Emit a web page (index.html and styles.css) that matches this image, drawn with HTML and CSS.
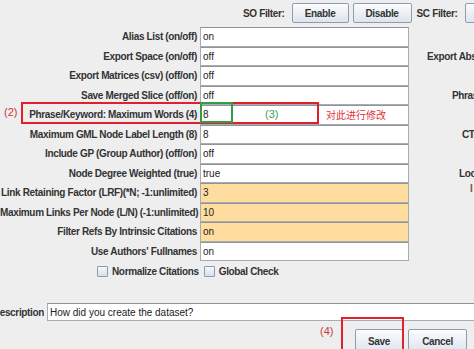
FILE: index.html
```html
<html lang="en">
<head>
    <meta charset="UTF-8">
    <title>Project Properties</title>
    <link rel="stylesheet" href="styles.css">
</head>
<body>
<div id="app">
    <div class="toolbar">
        <span class="lbl">SO Filter:</span>
        <button class="btn btn-enable" type="button">Enable</button>
        <button class="btn btn-disable" type="button">Disable</button>
        <span class="lbl sc">SC Filter:</span>
        <button class="btn btn-enable" type="button">Enable</button>
    </div>

    <div class="form">
        <div class="label">Alias List (on/off)</div>
        <div class="field">on</div>
        <div class="side"></div>

        <div class="label">Export Space (on/off)</div>
        <div class="field">off</div>
        <div class="side s-export">Export Abstracts (on/off)</div>

        <div class="label">Export Matrices (csv) (off/on)</div>
        <div class="field">off</div>
        <div class="side"></div>

        <div class="label">Save Merged Slice (off/on)</div>
        <div class="field">off</div>
        <div class="side s-phrase">Phrase Filter</div>

        <div class="label">Phrase/Keyword: Maximum Words (4)</div>
        <div class="field">8<span class="note-green">(3)</span><span class="note-red">对此进行修改</span></div>
        <div class="side"></div>

        <div class="label">Maximum GML Node Label Length (8)</div>
        <div class="field">8</div>
        <div class="side s-ct">CTSA</div>

        <div class="label">Include GP (Group Author) (off/on)</div>
        <div class="field">off</div>
        <div class="side"></div>

        <div class="label">Node Degree Weighted (true)</div>
        <div class="field">true</div>
        <div class="side s-loc">Look Back</div>

        <div class="label">Link Retaining Factor (LRF)(*N; -1:unlimited)</div>
        <div class="field warm">3</div>
        <div class="side s-item">I</div>

        <div class="label">Maximum Links Per Node (L/N) (-1:unlimited)</div>
        <div class="field warm">10</div>
        <div class="side"></div>

        <div class="label">Filter Refs By Intrinsic Citations</div>
        <div class="field warm">on</div>
        <div class="side"></div>

        <div class="label">Use Authors' Fullnames</div>
        <div class="field">on</div>
        <div class="side"></div>
    </div>

    <div class="checks">
        <span class="check"><span class="box"></span>Normalize Citations</span>
        <span class="check"><span class="box"></span>Global Check</span>
    </div>

    <div class="desc">
        <div class="desc-label"><span>Description</span></div>
        <div class="field desc-field">How did you create the dataset?</div>
    </div>

    <div class="actions">
        <button class="btn btn-save" type="button">Save</button>
        <button class="btn btn-cancel" type="button">Cancel</button>
    </div>

    <!-- annotations -->
    <span class="mark mark-2">(2)</span>
    <div class="frame frame-row"></div>
    <div class="frame-green"></div>
    <span class="mark mark-4">(4)</span>
    <div class="frame frame-save"></div>
</div>
</body>
</html>
```

FILE: styles.css
```css
body {
    margin: 0;
    padding: 0;
    background: #eeeeee;
    font-family: "Liberation Sans", Arial, sans-serif;
    color: #333333;
}

#app {
    position: relative;
    width: 474px;
    height: 349px;
    overflow: hidden;
}

.lbl,
.label,
.side,
.check,
.btn,
.desc-label {
    font-family: "Liberation Sans", Arial, sans-serif;
    font-weight: bold;
    font-size: 10px;
    letter-spacing: -0.35px;
}

.toolbar {
    display: flex;
    align-items: center;
    height: 20px;
    padding: 3px 0 4px 243px;
    white-space: nowrap;
}

.toolbar .lbl {
    margin-right: 7px;
}

.toolbar .sc {
    margin-left: 5px;
    margin-right: 8px;
}

.btn {
    height: 20px;
    padding: 0;
    border: 1px solid #8e9cae;
    border-radius: 2px;
    background: linear-gradient(#fbfcfd, #dce4ed);
    color: #333333;
    flex: none;
}

.btn-enable {
    width: 57px;
    margin-right: 4px;
}

.btn-disable {
    width: 59px;
}

.form {
    display: grid;
    grid-template-columns: 200px 209px 200px;
    grid-auto-rows: 19.5px;
}

.label {
    text-align: right;
    padding-right: 3px;
    line-height: 19.5px;
    white-space: nowrap;
}

.field {
    position: relative;
    box-sizing: border-box;
    height: 100%;
    border: 1px solid #a9adb2;
    border-top-color: #8f949a;
    background: #ffffff;
    padding-left: 2px;
    font-size: 10px;
    line-height: 17px;
    color: #222222;
    white-space: nowrap;
}

.field.warm {
    background: #fedd9f;
}

.side {
    line-height: 19.5px;
    white-space: nowrap;
}

.s-export { padding-left: 18px; }
.s-phrase { padding-left: 43px; }
.s-ct { padding-left: 53px; }
.s-loc { padding-left: 50px; }

.s-item {
    padding-left: 61px;
    line-height: 12px;
    color: #7a5a34;
}

.note-green {
    position: absolute;
    left: 64px;
    color: #3f9f55;
    font-size: 11px;
}

.note-red {
    position: absolute;
    left: 125px;
    color: #e0303a;
    font-family: "Noto Sans CJK SC", sans-serif;
    font-size: 10px;
}

.checks {
    display: flex;
    align-items: center;
    gap: 5px;
    height: 21px;
    padding-left: 97px;
}

.check {
    display: flex;
    align-items: center;
    gap: 4px;
}

.box {
    box-sizing: border-box;
    width: 11px;
    height: 11px;
    border: 1px solid #8a9ab0;
    border-radius: 1px;
    background: linear-gradient(#f6f8fb, #d7e0ea);
}

.desc {
    display: flex;
    align-items: center;
    margin-top: 21px;
    height: 18px;
}

.desc-label {
    display: flex;
    justify-content: flex-end;
    width: 44px;
    margin-right: 3px;
    white-space: nowrap;
    overflow: hidden;
}

.desc-field {
    flex: 1;
    margin-right: -10px;
}

.actions {
    display: flex;
    justify-content: flex-end;
    gap: 5px;
    padding-right: 7px;
    margin-top: 8px;
}

.btn-save {
    width: 48px;
    height: 24px;
}

.btn-cancel {
    width: 59px;
    height: 24px;
}

.mark {
    position: absolute;
    color: #c8383e;
    font-size: 11px;
}

.mark-2 {
    left: 4px;
    top: 106px;
}

.mark-4 {
    left: 320px;
    top: 325px;
}

.frame {
    position: absolute;
    box-sizing: border-box;
    border: 2px solid #e0202c;
}

.frame-row {
    left: 21px;
    top: 102px;
    width: 298px;
    height: 22px;
}

.frame-save {
    left: 341px;
    top: 317px;
    width: 63px;
    height: 40px;
}

.frame-green {
    position: absolute;
    box-sizing: border-box;
    left: 200px;
    top: 102px;
    width: 33px;
    height: 21px;
    border: 2px solid #2e9e48;
}
```
